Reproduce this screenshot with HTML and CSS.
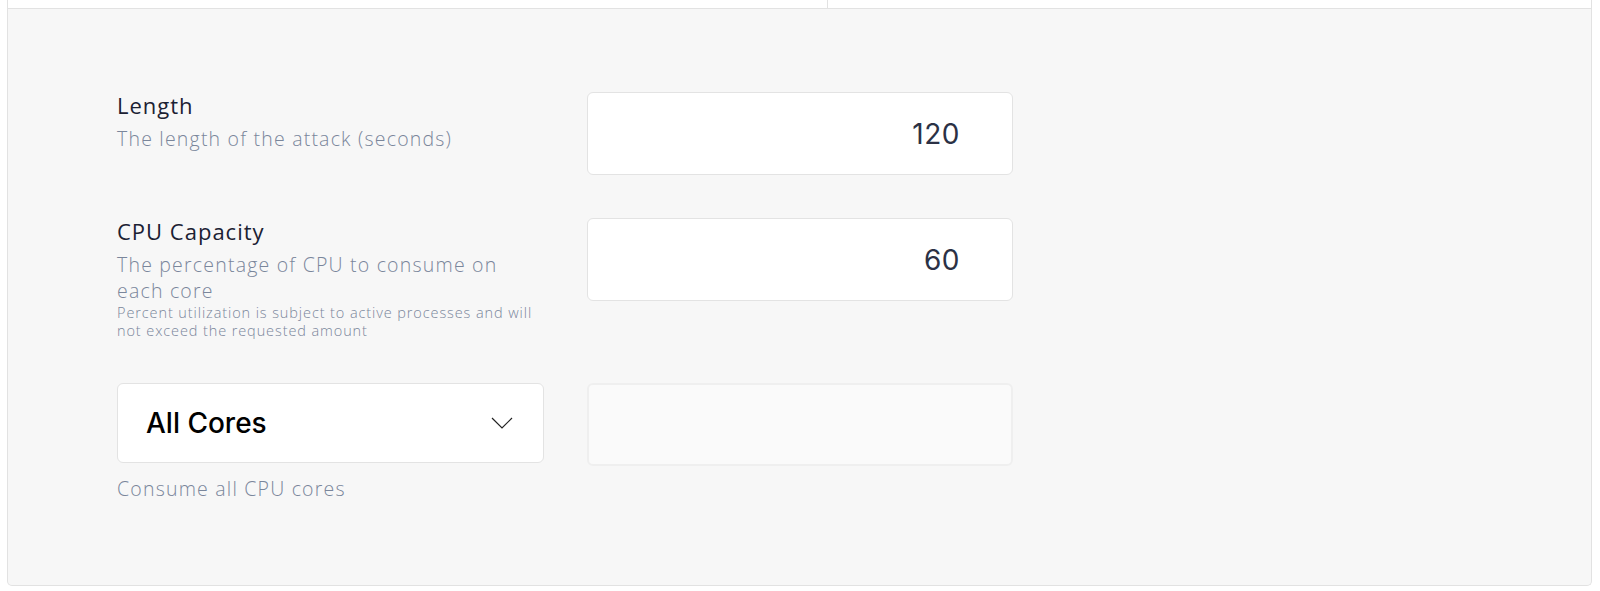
FILE: index.html
```html
<!DOCTYPE html>
<html lang="en">
<head>
    <meta charset="UTF-8">
    <meta name="viewport" content="width=device-width, initial-scale=1.0">
    <title>CPU Attack</title>
    <link rel="stylesheet" href="styles.css">
</head>
<body>
    <div class="tabs">
        <div class="tab"></div>
        <div class="tab"></div>
    </div>

    <div class="panel">
        <div class="field-row">
            <div class="field-info">
                <div class="field-label">Length</div>
                <div class="field-desc">The length of the attack (seconds)</div>
            </div>
            <input class="field-input" type="text" value="120">
        </div>

        <div class="field-row">
            <div class="field-info">
                <div class="field-label">CPU Capacity</div>
                <div class="field-desc">The percentage of CPU to consume on each core</div>
                <div class="field-note">Percent utilization is subject to active processes and will not exceed the requested amount</div>
            </div>
            <input class="field-input" type="text" value="60">
        </div>

        <div class="field-row">
            <div class="field-info">
                <div class="select-box">
                    <span>All Cores</span>
                    <svg class="chevron" width="22" height="12" viewBox="0 0 22 12">
                        <path d="M1 1 L11 11 L21 1" fill="none" stroke="#222" stroke-width="1.2"/>
                    </svg>
                </div>
                <div class="field-desc select-desc">Consume all CPU cores</div>
            </div>
            <div class="field-input disabled"></div>
        </div>
    </div>
</body>
</html>
```

FILE: styles.css
```css
:root {
    --border-color: #e2e2e2;
    --panel-bg: #f7f7f7;
    --label-color: #1b2133;
    --muted-color: #7a869b;
}

body {
    margin: 0;
    background-color: white;
    font-family: 'Open Sans', 'Noto Sans', sans-serif;
}

.tabs {
    display: grid;
    grid-template-columns: 819px 1fr;
    height: 8px;
    margin: 0 8px 0 7px;
    border: 1px solid var(--border-color);
    border-top: none;
}

.tab + .tab {
    border-left: 1px solid var(--border-color);
}

.panel {
    display: flex;
    flex-direction: column;
    gap: 43px;
    margin: 0 8px 0 7px;
    padding: 83px 0 83px 109px;
    background-color: var(--panel-bg);
    border: 1px solid var(--border-color);
    border-top: none;
    border-radius: 0 0 5px 5px;
}

.field-row {
    display: flex;
    gap: 43px;
    align-items: flex-start;
}

.field-info {
    width: 427px;
}

.field-label {
    font-size: 22px;
    line-height: 26px;
    letter-spacing: 1px;
    color: var(--label-color);
}

.field-desc {
    margin-top: 8px;
    font-size: 19.5px;
    font-weight: 300;
    line-height: 26px;
    letter-spacing: 1.2px;
    color: var(--muted-color);
}

.field-note {
    font-size: 14.5px;
    font-weight: 300;
    line-height: 18px;
    letter-spacing: 0.9px;
    color: var(--muted-color);
}

.field-input {
    width: 426px;
    height: 83px;
    box-sizing: border-box;
    padding: 0 52px 0 20px;
    border: 1px solid #e3e3e3;
    border-radius: 6px;
    background-color: white;
    font-family: Inter, sans-serif;
    font-size: 28px;
    letter-spacing: 0.5px;
    color: #2b3145;
    text-align: right;
    outline: none;
}

.field-input.disabled {
    background-color: #fafafa;
    border: 2px solid #efefef;
}

.select-box {
    display: flex;
    align-items: center;
    justify-content: space-between;
    height: 80px;
    box-sizing: border-box;
    padding: 0 30px 0 28px;
    border: 1px solid #e3e3e3;
    border-radius: 6px;
    background-color: white;
    font-family: Inter, sans-serif;
    font-size: 28px;
    font-weight: 500;
    color: #000;
}

.chevron {
    display: block;
}

.select-desc {
    margin-top: 13px;
}
```
